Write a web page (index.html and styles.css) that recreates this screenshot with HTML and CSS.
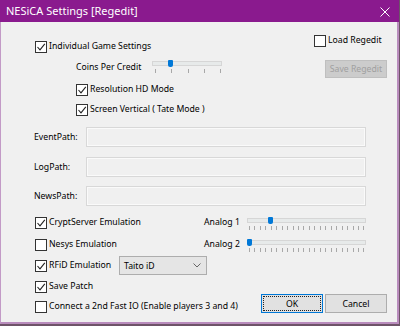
FILE: index.html
```html
<!DOCTYPE html>
<html>
<head>
<meta charset="utf-8">
<link rel="stylesheet" href="styles.css">
</head>
<body>
<div class="window">
  <div class="titlebar">
    <span class="title">NESiCA Settings [Regedit]</span>
    <svg class="close" width="10" height="10" viewBox="0 0 10 10"><path d="M0.5 0.5 L9.5 9.5 M9.5 0.5 L0.5 9.5" stroke="#fff" stroke-width="1" fill="none"/></svg>
  </div>
  <div class="client">
    <div class="top">
      <div class="top-left">
        <label class="check"><span class="box"><svg viewBox="0 0 10 10"><path d="M1.5 5 L4 7.8 L8.8 1.8" stroke="#222" stroke-width="1.1" fill="none"/></svg></span>Individual Game Settings</label>
        <div class="coins">
          <span class="coins-label">Coins Per Credit</span>
          <div class="slider coins-slider">
            <div class="track"></div>
            <div class="thumb" style="left:16px"></div>
            <div class="ticks"></div>
          </div>
        </div>
        <label class="check sub res"><span class="box"><svg viewBox="0 0 10 10"><path d="M1.5 5 L4 7.8 L8.8 1.8" stroke="#222" stroke-width="1.1" fill="none"/></svg></span>Resolution HD Mode</label>
        <label class="check sub tate"><span class="box"><svg viewBox="0 0 10 10"><path d="M1.5 5 L4 7.8 L8.8 1.8" stroke="#222" stroke-width="1.1" fill="none"/></svg></span>Screen Vertical ( Tate Mode )</label>
      </div>
      <div class="top-right">
        <label class="check"><span class="box"></span>Load Regedit</label>
        <button class="btn disabled save">Save Regedit</button>
      </div>
    </div>

    <div class="paths">
      <span class="path-label">EventPath:</span><div class="textbox"></div>
      <span class="path-label">LogPath:</span><div class="textbox"></div>
      <span class="path-label">NewsPath:</span><div class="textbox"></div>
    </div>

    <div class="options">
      <div class="row row-a">
        <label class="check cell-wide"><span class="box"><svg viewBox="0 0 10 10"><path d="M1.5 5 L4 7.8 L8.8 1.8" stroke="#222" stroke-width="1.1" fill="none"/></svg></span>CryptServer Emulation</label>
        <span class="analog-label">Analog 1</span>
        <div class="slider analog-slider">
          <div class="track"></div>
          <div class="thumb" style="left:21px"></div>
          <div class="ticks"></div>
        </div>
      </div>
      <div class="row row-b">
        <label class="check cell-wide"><span class="box"></span>Nesys Emulation</label>
        <span class="analog-label">Analog 2</span>
        <div class="slider analog-slider">
          <div class="track"></div>
          <div class="thumb" style="left:0px"></div>
          <div class="ticks"></div>
        </div>
      </div>
      <div class="row row-c">
        <label class="check cell-narrow"><span class="box"><svg viewBox="0 0 10 10"><path d="M1.5 5 L4 7.8 L8.8 1.8" stroke="#222" stroke-width="1.1" fill="none"/></svg></span>RFiD Emulation</label>
        <div class="combo"><span>Taito iD</span><svg width="8" height="5" viewBox="0 0 8 5"><path d="M0.5 0.5 L4 4 L7.5 0.5" stroke="#666" stroke-width="1" fill="none"/></svg></div>
      </div>
      <div class="row row-d">
        <label class="check"><span class="box"><svg viewBox="0 0 10 10"><path d="M1.5 5 L4 7.8 L8.8 1.8" stroke="#222" stroke-width="1.1" fill="none"/></svg></span>Save Patch</label>
      </div>
      <div class="row row-e">
        <label class="check"><span class="box"></span>Connect a 2nd Fast IO (Enable players 3 and 4)</label>
        <div class="buttons">
          <button class="btn ok">OK</button>
          <button class="btn">Cancel</button>
        </div>
      </div>
    </div>
  </div>
</div>
</body>
</html>
```

FILE: styles.css
```css
html, body {
  margin: 0;
  padding: 0;
}
body {
  width: 400px;
  height: 326px;
  overflow: hidden;
  background: #6e5468;
  font-family: "Noto Sans", "Open Sans", sans-serif;
  font-size: 8.7px;
  color: #000;
}
.window {
  box-sizing: border-box;
  width: 399px;
  height: 324px;
  border-left: 1px solid #c29ac6;
  border-right: 2px solid #b98cbd;
  border-bottom: 2px solid #b98cbd;
  background: #f0f0f0;
  display: flex;
  flex-direction: column;
}
.titlebar {
  height: 22px;
  flex: none;
  background: #8a1a8e;
  color: #fff;
  display: flex;
  align-items: center;
  justify-content: space-between;
  padding: 0 9px 0 6px;
  margin-left: -1px;
  margin-right: -2px;
}
.title {
  font-size: 11px;
  line-height: 22px;
}
.close {
  display: block;
  margin-top: 1px;
}
.client {
  flex: 1;
  padding: 0 10px 0 34px;
  display: flex;
  flex-direction: column;
}

/* checkbox */
.check {
  display: flex;
  align-items: center;
  height: 13px;
  line-height: 13px;
  gap: 2px;
  white-space: nowrap;
}
.box {
  box-sizing: border-box;
  width: 12px;
  height: 12px;
  flex: none;
  border: 1px solid #333;
  background: #fff;
  display: flex;
  align-items: center;
  justify-content: center;
}
.box svg {
  width: 10px;
  height: 10px;
  display: block;
}

/* top section */
.top {
  display: flex;
  justify-content: space-between;
}
.top-left {
  padding-top: 18px;
  display: flex;
  flex-direction: column;
}
.coins {
  display: flex;
  margin-top: 6px;
  padding-left: 41px;
  height: 16px;
}
.coins-label {
  width: 76px;
  line-height: 17px;
  white-space: nowrap;
}
.sub {
  margin-left: 41px;
}
.res {
  margin-top: 8px;
}
.tate {
  margin-top: 7px;
}
.top-right {
  width: 73px;
  padding-top: 12px;
  display: flex;
  flex-direction: column;
  align-items: flex-start;
}
.save {
  margin-top: 13px;
  margin-left: 11px;
}

/* slider */
.slider {
  position: relative;
  height: 14px;
}
.track {
  box-sizing: border-box;
  height: 5px;
  margin-top: 2px;
  background: #e7eaea;
  border: 1px solid #d6d6d6;
}
.thumb {
  position: absolute;
  top: 1px;
  width: 5px;
  height: 7px;
  background: #0078d7;
  border-radius: 1px 1px 2px 2px;
}
.ticks {
  height: 4px;
  margin-top: 3px;
}
.coins-slider {
  width: 70px;
  margin-top: 0;
}
.coins-slider .ticks {
  margin-left: 3px;
  background: repeating-linear-gradient(to right, #a8a8a8 0 1px, transparent 1px 16.25px);
}
.analog-slider {
  width: 119px;
}
.analog-slider .ticks {
  margin-left: 2px;
  background: repeating-linear-gradient(to right, #a8a8a8 0 1px, transparent 1px 5.45px);
}

/* buttons */
.btn {
  box-sizing: border-box;
  width: 62px;
  height: 19px;
  padding: 0;
  border: 1px solid #adadad;
  background: #e1e1e1;
  font-family: inherit;
  font-size: 8.7px;
  color: #000;
  line-height: 16px;
  white-space: nowrap;
}
.btn.disabled {
  height: 18px;
  background: #cccccc;
  border-color: #bfbfbf;
  color: #a0a0a0;
}
.btn.ok {
  border-color: #0078d7;
  outline: 1px dotted #222;
  outline-offset: -3px;
}

/* paths */
.paths {
  margin-top: 11px;
  margin-left: -1px;
  display: grid;
  grid-template-columns: 52px 280px;
  grid-template-rows: 20px 20px 20px;
  row-gap: 9.5px;
  align-items: center;
}
.path-label {
  line-height: 20px;
}
.textbox {
  box-sizing: border-box;
  height: 20px;
  border: 1px solid #d8d8d8;
  box-shadow: inset 1px 1px 0 #fafafa, inset -1px -1px 0 #fafafa;
  background: #f0f0f0;
}

/* options */
.options {
  display: flex;
  flex-direction: column;
}
.row {
  display: flex;
  align-items: center;
}
.row-a {
  margin-top: 10px;
  height: 13px;
  align-items: flex-start;
}
.row-b {
  margin-top: 9px;
  height: 13px;
  align-items: flex-start;
}
.cell-wide {
  width: 169px;
}
.analog-label {
  width: 43px;
  line-height: 13px;
}
.row-c {
  margin-top: 5px;
  height: 19px;
}
.cell-narrow {
  width: 84px;
}
.combo {
  box-sizing: border-box;
  width: 88px;
  height: 19px;
  border: 1px solid #adadad;
  background: #e5e5e5;
  display: flex;
  align-items: center;
  justify-content: space-between;
  padding: 0 5px 0 4px;
}
.combo svg {
  display: block;
}
.row-d {
  margin-top: 5px;
  height: 13px;
}
.row-e {
  margin-top: 1px;
  height: 19px;
  align-items: flex-end;
  justify-content: space-between;
}
.buttons {
  display: flex;
  gap: 2px;
}
```
